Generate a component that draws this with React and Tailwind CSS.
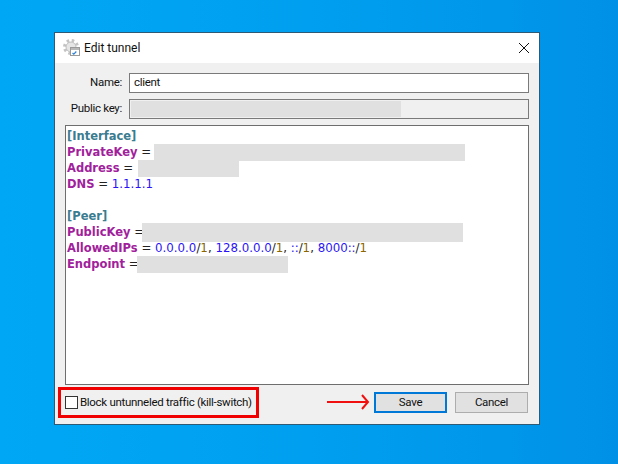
import React from 'react';

const Key = ({ children }) => <span className="text-[11.500px] font-bold text-[#a1219c]">{children}</span>;
const Section = ({ children }) => <div className="h-4 text-[11.500px] font-bold text-[#3a7c90]">{children}</div>;
const Num = ({ children }) => <span className="text-[#2a14f5]">{children}</span>;
const Cidr = ({ children }) => <span className="text-[#8a6500]">{children}</span>;

const Masked = ({ name, gap, width, height }) => (
  <div className="flex h-4 items-center whitespace-pre">
    <Key>{name}</Key>
    <span>{' ='}</span>
    <div className={`bg-[#e0e0e0] ${gap} ${width} ${height}`} />
  </div>
);

const App = () => {
  return (
    <div className="h-[464px] w-[618px] overflow-hidden bg-gradient-to-r from-[#00a7f4] via-[#009fef] to-[#0091e6] pl-[54px] pt-[32px] font-['Roboto',sans-serif] text-[11.500px] tracking-[-0.3px] text-[#111]">
      <div className="relative flex h-[393px] w-[486px] flex-col border border-[#2f5a75] bg-[#f0f0f0]">
        <div className="flex h-[30px] shrink-0 items-center bg-white pl-2 pr-[10px]">
          <svg width="18" height="18" viewBox="0 0 18 18" className="-mt-px mr-[3px]">
            <circle cx="8" cy="8" r="6.500" fill="none" stroke="#c4c4c4" strokeWidth="3" strokeDasharray="2.500 2.600" />
            <circle cx="8" cy="8" r="5" fill="#e6e6e6" stroke="#b4b4b4" strokeWidth="0.800" />
            <rect x="7.500" y="8.500" width="9" height="8" fill="#fff" stroke="#9a9a9a" />
            <rect x="8" y="9" width="8" height="2" fill="#b8b8b8" />
            <path d="M9.500 14l1.300 1.200 2.500-2.700" fill="none" stroke="#2f83d8" strokeWidth="1.200" />
          </svg>
          <span className="text-[12px] tracking-normal">Edit tunnel</span>
          <svg width="10" height="10" viewBox="0 0 10 10" className="-mt-px ml-auto">
            <path d="M0 0l10 10M10 0L0 10" stroke="#111" strokeWidth="1" fill="none" />
          </svg>
        </div>

        <div className="flex min-h-0 flex-1 flex-col px-[10px] pt-[10px]">
          <div className="flex h-5 items-center">
            <label className="w-[64px] shrink-0 pr-[7px] text-right">Name:</label>
            <div className="flex h-5 w-[400px] items-center border border-[#7a7a7a] bg-white px-1">client</div>
          </div>
          <div className="mt-[6px] flex h-5 items-center">
            <label className="w-[64px] shrink-0 pr-[7px] text-right">Public key:</label>
            <div className="h-5 w-[400px] border border-[#7a7a7a] bg-[#f0f0f0] p-px">
              <div className="h-4 w-[270px] bg-[#e0e0e0]" />
            </div>
          </div>

          <div className="mt-[6px] h-[260px] w-[464px] border border-[#6e6e6e] bg-white pl-[1px] pt-[2px] font-['DejaVu_Sans',sans-serif] text-[11.800px] leading-4 tracking-normal text-[#222]">
            <Section>[Interface]</Section>
            <Masked name="PrivateKey" gap="ml-[3px]" width="w-[311px]" height="h-[17px]" />
            <Masked name="Address" gap="ml-[5px]" width="w-[101px]" height="h-[17px]" />
            <div className="h-4 whitespace-pre"><Key>DNS</Key> = <Num>1.1.1.1</Num></div>
            <div className="h-4" />
            <Section>[Peer]</Section>
            <Masked name="PublicKey" gap="-ml-[2px]" width="w-[321px]" height="h-[19px]" />
            <div className="h-4 whitespace-pre">
              <Key>AllowedIPs</Key> = <Num>0.0.0.0</Num>/<Cidr>1</Cidr>, <Num>128.0.0.0</Num>/<Cidr>1</Cidr>, <Num>::</Num>/<Cidr>1</Cidr>, <Num>8000::</Num>/<Cidr>1</Cidr>
            </div>
            <Masked name="Endpoint" gap="-ml-[2px]" width="w-[151px]" height="h-[17px]" />
          </div>

          <div className="mt-[7px] flex h-[21px] items-center">
            <div className="h-[13px] w-[13px] border border-[#333] bg-white" />
            <span className="ml-[2px]">Block untunneled traffic (kill-switch)</span>
            <button className="ml-auto h-[21px] w-[73px] border-2 border-[#0078d7] bg-[#e1e1e1]">Save</button>
            <button className="ml-2 mr-[1px] h-[21px] w-[73px] border border-[#adadad] bg-[#e1e1e1]">Cancel</button>
          </div>
        </div>

        {/* annotations drawn over the dialog */}
        <div className="absolute left-[3px] top-[354px] h-[31px] w-[201px] border-[3px] border-[#f00000]" />
        <svg width="43" height="16" viewBox="0 0 43 16" className="absolute left-[272px] top-[361px]">
          <path d="M0 8h41M35 1l6 7-6 7" fill="none" stroke="#f01010" strokeWidth="2" />
        </svg>
      </div>
    </div>
  );
};

export default App;
